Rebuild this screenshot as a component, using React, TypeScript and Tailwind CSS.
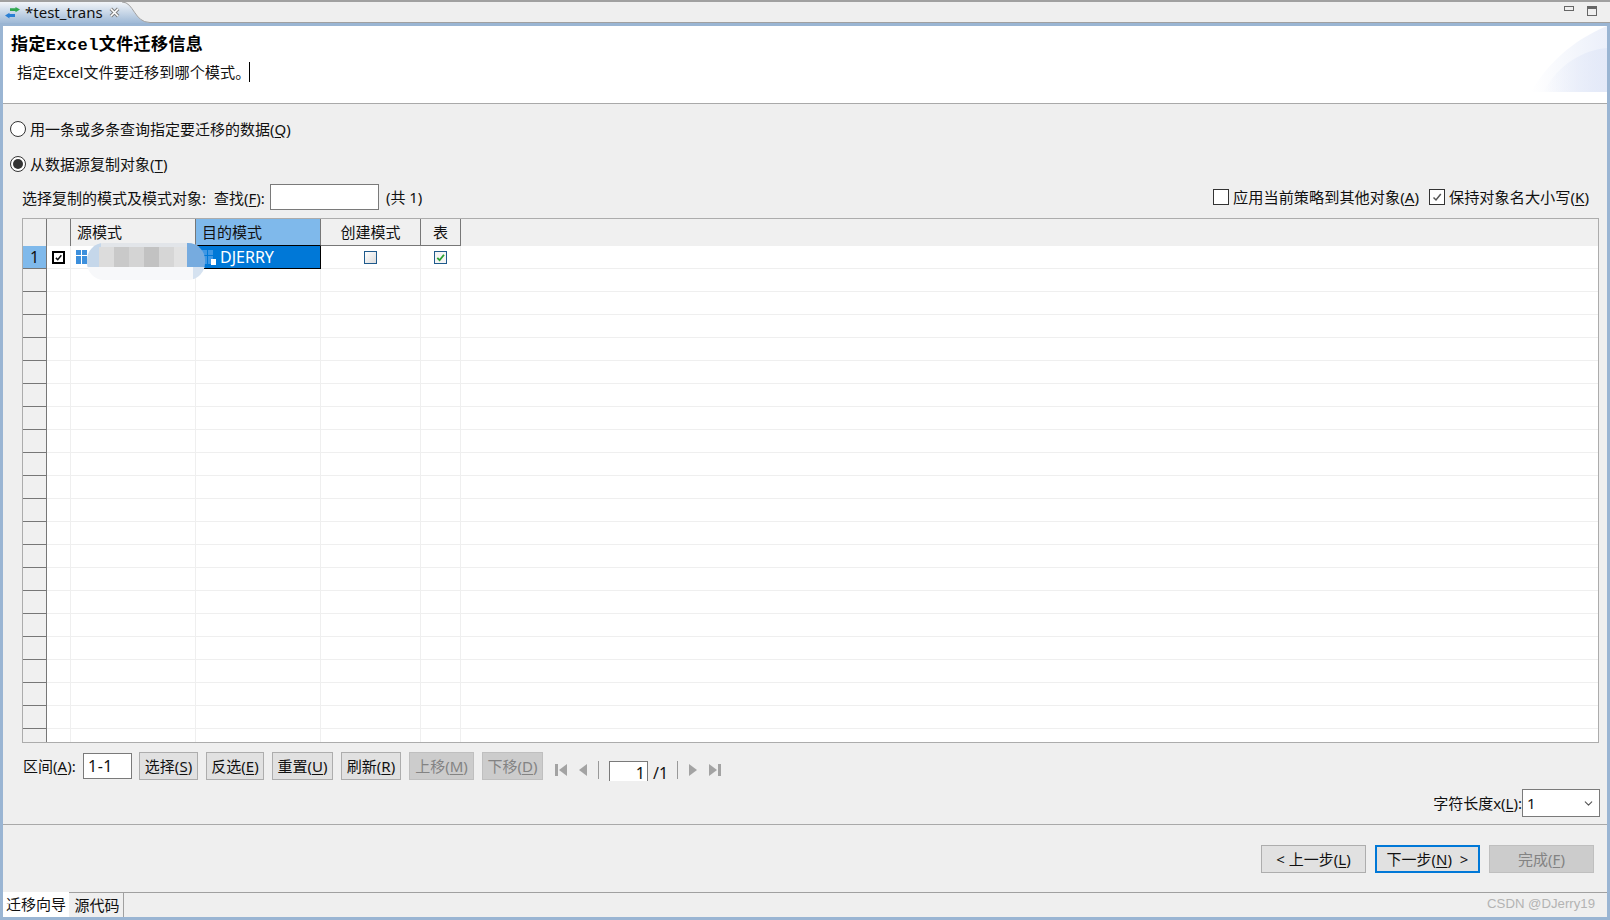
import { ChevronDown } from "lucide-react";

const sans = "font-['Segoe_UI','Noto_Sans','Noto_Sans_CJK_SC',sans-serif]";

// one underlined mnemonic, e.g. 选择(S)
const Label = ({ text, k, tail = "" }: { text: string; k: string; tail?: string }) => (
  <span className="whitespace-nowrap">
    {text}(<span className="underline underline-offset-2">{k}</span>){tail}
  </span>
);

const Btn = ({ text, k, w, disabled = false, primary = false, pre = "", tail = "" }: { text: string; k: string; w: string; disabled?: boolean; primary?: boolean; pre?: string; tail?: string }) => (
  <div
    className={`${w} h-[28px] shrink-0 flex items-center justify-center text-[15px] whitespace-pre ${
      disabled
        ? "bg-[#cccccc] border border-[#bfbfbf] text-[#838383]"
        : primary
        ? "bg-[#e1e1e1] border-2 border-[#0078d7] text-[#111]"
        : "bg-[#e1e1e1] border border-[#adadad] text-[#111]"
    }`}
  >
    {pre}
    <Label text={text} k={k} />
    {tail}
  </div>
);

const CheckMark = ({ color = "#111", width = 2 }: { color?: string; width?: number }) => (
  <svg viewBox="0 0 12 12" className="w-full h-full">
    <path d="M2.5 6.5 L5 9 L9.8 3" fill="none" stroke={color} strokeWidth={width} />
  </svg>
);

// window-pane schema icon in the grid cells
const SchemaIcon = ({ color, dot = false }: { color: string; dot?: boolean }) => (
  <svg width="15" height="15" viewBox="0 0 15 15" className="shrink-0">
    <rect x="0" y="0" width="5" height="5" fill={color} />
    <rect x="6" y="0" width="5" height="5" fill={color} />
    <rect x="0" y="6" width="5" height="8" fill={color} />
    <rect x="6" y="6" width="5" height="8" fill={color} />
    {dot && <rect x="9" y="9" width="5" height="6" fill="#ffffff" />}
  </svg>
);

const NavIcon = ({ dir, bar = false }: { dir: "l" | "r"; bar?: boolean }) =>
  bar ? (
    <svg width="12" height="12" viewBox="0 0 12 12" className="shrink-0">
      {dir === "l" ? (
        <>
          <rect x="0" y="0" width="3" height="12" fill="#a3a3a3" />
          <path d="M12 0 V12 L4 6 Z" fill="#a3a3a3" />
        </>
      ) : (
        <>
          <path d="M0 0 V12 L8 6 Z" fill="#a3a3a3" />
          <rect x="9" y="0" width="3" height="12" fill="#a3a3a3" />
        </>
      )}
    </svg>
  ) : (
    <svg width="8" height="12" viewBox="0 0 8 12" className="shrink-0">
      <path d={dir === "l" ? "M8 0 V12 L0 6 Z" : "M0 0 V12 L8 6 Z"} fill="#a3a3a3" />
    </svg>
  );

const Radio = ({ on = false }: { on?: boolean }) => (
  <div className="w-[16px] h-[16px] rounded-full border border-[#333] bg-white flex items-center justify-center shrink-0">
    {on && <div className="w-[10px] h-[10px] rounded-full bg-[#333]" />}
  </div>
);

// pixelated smear that hides the source schema name
const mosaicTop = ["#dcdcdc", "#c9c9c9", "#d4d4d4", "#c2c2c2", "#d6d6d6", "#e2e2e2"];

const Mosaic = () => (
  <svg width="118" height="37" viewBox="0 0 118 37" className="absolute left-[64px] top-[24px] pointer-events-none">
    <defs>
      <clipPath id="blob">
        <rect x="0" y="0" width="118" height="37" rx="17" />
      </clipPath>
    </defs>
    <g clipPath="url(#blob)">
      <rect x="0" y="0" width="118" height="4" fill="#e2e5e9" />
      <rect x="0" y="0" width="14" height="24" fill="#c5d7ea" />
      {mosaicTop.map((c, i) => (
        <rect key={c} x={12 + i * 15} y="4" width="15" height="20" fill={c} />
      ))}
      <rect x="0" y="24" width="118" height="13" fill="#f7f8fa" />
      <rect x="100" y="0" width="18" height="24" fill="#76abdf" />
      <rect x="106" y="24" width="12" height="13" fill="#d5e2f0" />
    </g>
  </svg>
);

const rows = Array.from({ length: 22 }, (_, i) => i);

export default function App() {
  return (
    <div className={`w-[1610px] h-[920px] overflow-hidden bg-[#efefef] text-[15px] text-[#111] flex flex-col ${sans}`}>
      {/* editor tab strip */}
      <div className="h-[23px] shrink-0 flex border-t-2 border-[#a0a0a0]">
        <div className="w-[122px] h-[21px] shrink-0 bg-gradient-to-b from-[#f2f5f9] to-[#9fb9d6] flex items-center pl-[5px] gap-[5px]">
          <svg width="15" height="12" viewBox="0 0 15 12" className="shrink-0">
            <path d="M5 1.2 H10.5 V0 L15 2.6 L10.5 5.2 V4 H5 Z" fill="#2fa84f" />
            <path d="M10 7 H4.5 V5.8 L0 8.6 L4.5 11.4 V10 H10 Z" fill="#2a7fd4" />
          </svg>
          <span className="text-[15px] leading-none whitespace-nowrap">*test_trans</span>
          <svg width="11" height="11" viewBox="0 0 11 11" className="ml-[1px] shrink-0">
            <path d="M1.8 1.8 L9.2 9.2 M9.2 1.8 L1.8 9.2" stroke="#7d7d7d" strokeWidth="3.4" />
            <path d="M1.8 1.8 L9.2 9.2 M9.2 1.8 L1.8 9.2" stroke="#ffffff" strokeWidth="1.6" />
          </svg>
        </div>
        <svg width="28" height="21" viewBox="0 0 28 21" className="shrink-0">
          <defs>
            <linearGradient id="tabEnd" x1="0" y1="0" x2="0" y2="1">
              <stop offset="0" stopColor="#f2f5f9" />
              <stop offset="1" stopColor="#9fb9d6" />
            </linearGradient>
          </defs>
          <path d="M0 0 C12 0 12 20.5 28 20.5 V21 H0 Z" fill="url(#tabEnd)" />
          <path d="M0 0 C12 0 12 20.5 28 20.5" fill="none" stroke="#a0a0a0" />
        </svg>
        <div className="flex-1 flex items-start justify-end gap-[13px] pt-[4px] pr-[13px] border-b border-[#a0a0a0]">
          <div className="w-[10px] h-[5px] border border-[#666]" />
          <div className="w-[10px] h-[10px] border border-[#666] border-t-[3px]" />
        </div>
      </div>

      {/* body with the blue view border */}
      <div className="flex-1 min-h-0 flex flex-col border-[3px] border-[#9ab5d3]">
        {/* banner */}
        <div className="h-[77px] shrink-0 bg-white border-b border-[#a9a9a9] relative overflow-hidden box-content">
          <div className="font-['Liberation_Mono','Noto_Sans_CJK_SC',monospace] font-bold text-[17px] tracking-[0.4px] leading-[22px] pl-[8px] pt-[9px] text-black">
            指定Excel文件迁移信息
          </div>
          <div className="flex items-center pl-[14px] mt-[5px] text-[15.2px] leading-[20px]">
            指定Excel文件要迁移到哪个模式。
            <div className="w-px h-[20px] bg-black -ml-[1px]" />
          </div>
          <svg width="76" height="66" viewBox="0 0 76 66" className="absolute right-0 top-0">
            <defs>
              <linearGradient id="bannerFade" x1="0" y1="0" x2="1" y2="0">
                <stop offset="0" stopColor="#e3e9f8" stopOpacity="0" />
                <stop offset="1" stopColor="#e3e9f8" />
              </linearGradient>
            </defs>
            <path d="M0 66 C16 38 42 14 76 0 V66 Z" fill="url(#bannerFade)" opacity="0.7" />
            <path d="M12 66 C28 38 52 24 76 22 V66 Z" fill="url(#bannerFade)" />
          </svg>
        </div>

        {/* form */}
        <div className="flex-1 min-h-0 flex flex-col">
          <div className="flex items-center gap-[4px] h-[20px] mt-[15px] pl-[7px]">
            <Radio />
            <Label text="用一条或多条查询指定要迁移的数据" k="Q" />
          </div>
          <div className="flex items-center gap-[4px] h-[20px] mt-[15px] pl-[7px]">
            <Radio on />
            <Label text="从数据源复制对象" k="T" />
          </div>
          <div className="flex items-center h-[26px] mt-[10px] pl-[19px] pr-[18px]">
            <span className="whitespace-nowrap pt-[3px]">选择复制的模式及模式对象:</span>
            <span className="ml-[8px] whitespace-nowrap pt-[3px]">查找(<span className="underline underline-offset-2">F</span>):</span>
            <div className="w-[109px] h-[26px] bg-white border border-[#7a7a7a] ml-[5px]" />
            <span className="ml-[7px] whitespace-nowrap">(共 1)</span>
            <div className="ml-auto flex items-center gap-[4px] text-[15.2px]">
              <div className="w-[16px] h-[16px] bg-white border border-[#333]" />
              <Label text="应用当前策略到其他对象" k="A" />
            </div>
            <div className="ml-[10px] flex items-center gap-[4px] text-[15.2px]">
              <div className="w-[16px] h-[16px] bg-white border border-[#333] p-px">
                <CheckMark color="#555" width={1.5} />
              </div>
              <Label text="保持对象名大小写" k="K" />
            </div>
          </div>

          {/* grid */}
          <div className="h-[525px] shrink-0 mt-[8px] ml-[19px] mr-[8px] border border-[#acacac] bg-white overflow-hidden relative">
            <div className="flex h-[27px] bg-[#f0f0f0] text-[15px]">
              <div className="w-[24px] border-r border-[#777]" />
              <div className="w-[24px] border-r border-[#777]" />
              <div className="w-[125px] border-r border-[#777] pl-[6px] flex items-center">源模式</div>
              <div className="w-[125px] border-r border-b border-r-[#777] border-b-black pl-[6px] flex items-center bg-[#7fb9eb]">目的模式</div>
              <div className="w-[100px] border-r border-b border-[#777] flex items-center justify-center">创建模式</div>
              <div className="w-[40px] border-r border-b border-[#777] flex items-center justify-center">表</div>
            </div>
            {rows.map((i) => {
              const first = i === 0;
              return (
                <div key={i} className="flex h-[23px] border-b border-[#efefef]">
                  <div className={`w-[24px] border-r border-b -mb-px border-[#777] flex items-center justify-center text-[16px] ${first ? "bg-[#7fb9eb]" : "bg-[#f0f0f0]"}`}>
                    {first ? "1" : ""}
                  </div>
                  <div className="w-[24px] border-r border-[#efefef] flex items-center justify-center">
                    {first && (
                      <div className="w-[13px] h-[13px] bg-white border-2 border-black">
                        <CheckMark />
                      </div>
                    )}
                  </div>
                  <div className="w-[125px] border-r border-[#efefef] flex items-center pl-[5px]">
                    {first && <SchemaIcon color="#3c8fdc" />}
                  </div>
                  <div className={`w-[125px] border-r flex items-center pl-[5px] ${first ? "bg-[#0078d7] border-black border-b border-l -mb-px text-white gap-[3px]" : "border-[#efefef]"}`}>
                    {first && (
                      <>
                        <SchemaIcon color="#3f97e4" dot />
                        <span className="text-[16px]">DJERRY</span>
                      </>
                    )}
                  </div>
                  <div className="w-[100px] border-r border-[#efefef] flex items-center justify-center">
                    {first && <div className="w-[13px] h-[13px] border border-[#1f5a8c] bg-gradient-to-br from-[#ffffff] to-[#dcdcdc]" />}
                  </div>
                  <div className="w-[40px] border-r border-[#efefef] flex items-center justify-center">
                    {first && (
                      <div className="w-[13px] h-[13px] border border-[#1f5a8c] bg-[#f4f4f4]">
                        <CheckMark color="#2aa032" />
                      </div>
                    )}
                  </div>
                </div>
              );
            })}
            <Mosaic />
          </div>

          {/* range and paging row */}
          <div className="flex items-center h-[28px] mt-[9px] pl-[20px] text-[15px]">
            <div className="w-[60px] shrink-0">
              <Label text="区间" k="A" tail=":" />
            </div>
            <div className="w-[49px] h-[26px] bg-white border border-[#7a7a7a] pl-[4px] flex items-center text-[16px] tracking-[0.5px]">1-1</div>
            <div className="flex items-center gap-[8px] ml-[7px]">
              <Btn text="选择" k="S" w="w-[59px]" />
              <Btn text="反选" k="E" w="w-[58px]" />
              <Btn text="重置" k="U" w="w-[61px]" />
              <Btn text="刷新" k="R" w="w-[60px]" />
              <Btn text="上移" k="M" w="w-[65px]" disabled />
              <Btn text="下移" k="D" w="w-[61px]" disabled />
            </div>
            <div className="flex items-center ml-[12px] gap-[12px] mt-[8px]">
              <NavIcon dir="l" bar />
              <NavIcon dir="l" />
            </div>
            <div className="w-px h-[18px] bg-[#999] ml-[11px] mt-[8px]" />
            <div className="flex items-start h-[20px] self-start mt-[9px] ml-[10px]">
              <div className="w-[39px] h-[20px] bg-white border border-b-0 border-[#7a7a7a] pr-[2px] pt-[4px] text-right leading-[15px] text-[16px]">1</div>
              <span className="ml-[5px] pt-[5px] leading-[15px] text-[16px]">/1</span>
            </div>
            <div className="w-px h-[18px] bg-[#999] ml-[9px] mt-[8px]" />
            <div className="flex items-center ml-[11px] gap-[12px] mt-[8px]">
              <NavIcon dir="r" />
              <NavIcon dir="r" bar />
            </div>
          </div>

          {/* char length */}
          <div className="flex items-center justify-end h-[28px] mt-[9px] pr-[7px]">
            <Label text="字符长度x" k="L" tail=":" />
            <div className="w-[78px] h-[28px] bg-white border border-[#7a7a7a] flex items-center justify-between pl-[4px] pr-[4px]">
              <span>1</span>
              <ChevronDown size={13} className="text-[#555]" />
            </div>
          </div>

          <div className="h-px bg-[#a9a9a9] shrink-0 mt-[7px]" />

          {/* wizard buttons */}
          <div className="flex justify-end gap-[9px] mt-[20px] pr-[13px]">
            <Btn text="上一步" k="L" w="w-[105px]" pre="< " />
            <Btn text="下一步" k="N" w="w-[105px]" primary tail="  >" />
            <Btn text="完成" k="F" w="w-[105px]" disabled />
          </div>

          {/* bottom tabs */}
          <div className="mt-auto h-[25px] shrink-0 border-t border-[#a0a0a0] flex relative">
            <div className="w-[66px] h-[25px] -mt-px bg-white flex items-center justify-center">迁移向导</div>
            <div className="w-[53px] ml-[2px] border-r border-[#a0a0a0] flex items-center justify-center">源代码</div>
            <span className="absolute right-[12px] top-[1px] text-[13.2px] text-[#b3b3b3] font-['Liberation_Sans',sans-serif]">CSDN @DJerry19</span>
          </div>
        </div>
      </div>
    </div>
  );
}
